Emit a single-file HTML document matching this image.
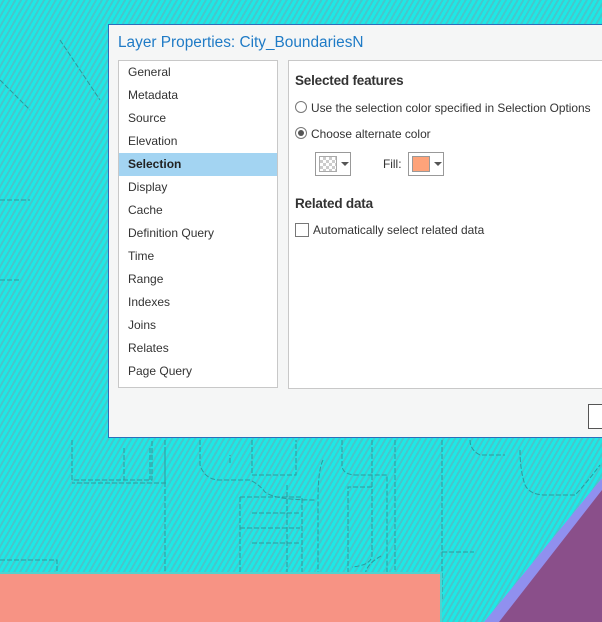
<!DOCTYPE html>
<html><head><meta charset="utf-8"><style>
*{margin:0;padding:0;box-sizing:border-box}
body{width:602px;height:622px;overflow:hidden;position:relative;font-family:"Liberation Sans",sans-serif;
background:repeating-linear-gradient(-60deg,#1ee8e6 0 3px,#45c8cc 3px 5px);}
.abs{position:absolute}
#dlg{left:108px;top:24px;width:500px;height:414px;background:#f5f6f6;border:1px solid #2a6ebd;border-right:none}
#title{left:9px;top:9px;font-size:15.4px;color:#1f7bc6}
#list{left:9px;top:35px;width:160px;height:328px;background:#fff;border:1px solid #c8c8c8}
#list div{height:23px;line-height:23px;padding-left:9px;font-size:12px;color:#333}
#list .sel{background:#a3d4f2;font-weight:bold;color:#222}
#panel{left:179px;top:35px;width:330px;height:329px;background:#fff;border:1px solid #c8c8c8}
.h{font-size:13.5px;color:#333;font-weight:bold;letter-spacing:-0.2px}
.t{font-size:11.9px;color:#333}
.radio{width:12px;height:12px;border:1px solid #777;border-radius:50%;background:#fff}
.sw{width:36px;height:24px;border:1px solid #999;background:#fff}
</style></head><body>
<svg class="abs" style="left:0;top:0" width="602" height="622" fill="none" stroke="#2a9a9c" stroke-width="1" stroke-dasharray="5 2">
<path d="M72 440V480h80V440M124 448V480M150 448V480M165 450V483M166 483H72M0 560h57v12M165 440v140M200 440v25q5 15 20 15h30q10 5 15 12 10 8 50 8M252 440V475H296V440M230 463v-8M240 497h62v110M240 497v80h60M252 513h48M240 528h60M252 543h48M287 485v127M342 440v25q0 10 15 10h30v115M323 460q-5 10-5 40v120M320 580h28V487h24M372 440V555q0 10-20 12M395 440V570M395 580h-30q-2-15 18-25M442 440V600M442 552h32M470 440q0 10 10 15h25M520 450q0 20 5 35q5 10 20 10h30q10-10 25-30M0 80l30 30M60 40l40 60M0 200h30M0 280h20"/>
</svg>
<div class="abs" style="left:0;top:572px;width:442px;height:50px;background:#f79384;border-top:2px solid #4fd3cf;border-right:2px solid #4fd3cf"></div>
<svg class="abs" style="left:0;top:0" width="602" height="622"><polygon points="602,478 602,622 484,622" fill="#9090ef"/><polygon points="602,490 602,622 499,622" fill="#8a4f8a"/></svg>
<div id="dlg" class="abs">
<div id="title" class="abs">Layer Properties: City_BoundariesN</div>
<div id="list" class="abs">
<div>General</div><div>Metadata</div><div>Source</div><div>Elevation</div><div class="sel">Selection</div><div>Display</div><div>Cache</div><div>Definition Query</div><div>Time</div><div>Range</div><div>Indexes</div><div>Joins</div><div>Relates</div><div>Page Query</div>
</div>
<div id="panel" class="abs">
<div class="abs h" style="left:6px;top:12px">Selected features</div>
<div class="abs radio" style="left:6px;top:40px"></div>
<div class="abs t" style="left:22px;top:40px">Use the selection color specified in Selection Options</div>
<div class="abs radio" style="left:6px;top:66px"><div class="abs" style="left:2px;top:2px;width:6px;height:6px;border-radius:50%;background:#555"></div></div>
<div class="abs t" style="left:22px;top:66px">Choose alternate color</div>
<div class="abs sw" style="left:26px;top:91px"><div class="abs" style="left:3px;top:3px;width:18px;height:16px;border:1px solid #aaa;background:repeating-conic-gradient(#ccc 0 25%,#fff 0 50%) 0 0/6px 6px"></div><div class="abs" style="left:25px;top:9px;border:4px solid transparent;border-top:4px solid #555"></div></div>
<div class="abs t" style="left:94px;top:96px">Fill:</div>
<div class="abs sw" style="left:119px;top:91px"><div class="abs" style="left:3px;top:3px;width:18px;height:16px;border:1px solid #999;background:#fea37a"></div><div class="abs" style="left:25px;top:9px;border:4px solid transparent;border-top:4px solid #555"></div></div>
<div class="abs h" style="left:6px;top:135px">Related data</div>
<div class="abs" style="left:6px;top:162px;width:14px;height:14px;border:1px solid #777;background:#fff"></div>
<div class="abs t" style="left:24px;top:162px">Automatically select related data</div>
</div>
<div class="abs" style="left:479px;top:379px;width:30px;height:25px;border:1px solid #555;background:#fff"></div>
</div>
</body></html>
